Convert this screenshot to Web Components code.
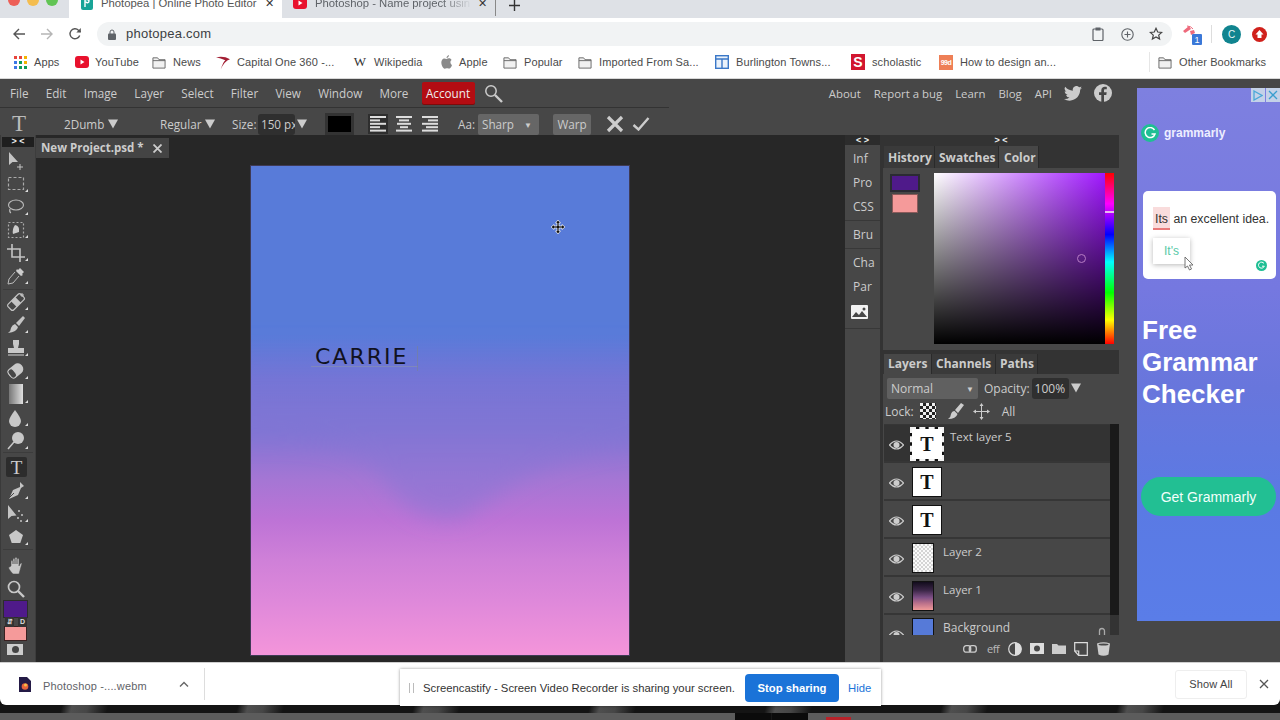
<!DOCTYPE html>
<html><head><meta charset="utf-8"><title>Photopea</title>
<style>
html,body{margin:0;padding:0;width:1280px;height:720px;overflow:hidden;background:#111;font-family:"Open Sans","Liberation Sans",sans-serif}
</style></head><body>
<browser-chrome></browser-chrome>
<pp-app></pp-app>
<download-bar></download-bar>
<wallpaper-strip></wallpaper-strip>
<share-bar></share-bar>
<script>
const def=(n,h)=>customElements.define(n,class extends HTMLElement{constructor(){super();this.attachShadow({mode:'open'}).innerHTML=h}});
const folder='<svg slot="icon" width="15" height="13" viewBox="0 0 15 13"><path d="M1 1.5h5l1.5 2H14v9H1z" fill="#f1f1f1" stroke="#666" stroke-width="1"/><path d="M1 4.5h13" stroke="#666"/></svg>';
const tri='<svg width="10" height="10" viewBox="0 0 10 10" style="flex:none"><path d="M0 .5h10L5 9.500z" fill="#ccc"/></svg>';

def('bm-item',`<style>:host{display:flex;align-items:center;flex:none;gap:7px;font:11px "Liberation Sans",sans-serif;letter-spacing:.1px;color:#4a4a4a;white-space:nowrap}
.i{width:14px;height:14px;display:flex;align-items:center;justify-content:center;flex:none}</style><span class="i"><slot name="icon"></slot></span><slot></slot>`);

def('browser-chrome',`<style>
:host{display:block;background:#fff;height:79px;font-family:"Liberation Sans",sans-serif}
.tabs{height:18px;background:#dee1e6;overflow:hidden;display:flex;align-items:flex-end;position:relative}
.dots{display:flex;gap:7px;width:69px;padding-left:8px;box-sizing:border-box;align-self:flex-end;margin-bottom:12px}
.dots i{width:12px;height:12px;border-radius:50%;flex:none}
.tab{width:213px;height:36px;box-sizing:border-box;flex:none;display:flex;align-items:flex-end;padding:0 0 8px 11px;font-size:11.300px;color:#5f6368;line-height:14px;position:relative}
.tab.on{background:#fff;border-radius:8px 8px 0 0;color:#555}
.tab svg{flex:none;margin-right:7px;margin-left:0}
.tab .t{flex:1;white-space:nowrap;height:14px}
.tab:not(.on) .t{-webkit-mask-image:linear-gradient(90deg,#000 80%,transparent 100%);mask-image:linear-gradient(90deg,#000 80%,transparent 100%)}
.tab .x{width:20px;text-align:center;color:#333;font-size:11px;margin-right:3px}
.plus{margin-left:13px;margin-bottom:7px;flex:none}
.sep{width:1px;height:16px;background:#888;flex:none;margin-bottom:2px}
.bar{height:28px;display:flex;align-items:center;padding-top:4px;box-sizing:border-box}
.nav{width:97px;display:flex;flex:none;padding-left:12px;box-sizing:border-box;gap:14px;align-items:center}
.omni{width:1075px;height:24px;flex:none;background:#f1f3f4;border-radius:12px;display:flex;align-items:center;box-sizing:border-box;padding-left:11px;font-size:13px;color:#3c4043;letter-spacing:.25px}
.omni .u{margin-left:10px;flex:1;margin-top:-1px}
.omni svg{flex:none}
.ext{display:flex;align-items:center;flex:1;position:relative}
.book{height:33px;display:flex;align-items:center;padding-left:13px;border-bottom:1px solid #d8d8d8;box-sizing:border-box}
</style>
<div class="tabs">
 <div class="dots"><i style="background:#ed5f57"></i><i style="background:#f4bd4f"></i><i style="background:#61c454"></i></div>
 <div class="tab on"><svg width="14" height="14" viewBox="0 0 14 14"><rect x="1" y="0" width="12" height="14" rx="2" fill="#18a497"/><path d="M5 11V4.500c0-1.500 4-1.500 4 .5s-3 2.500-3 .5" fill="none" stroke="#fff" stroke-width="1.400"/></svg><span class="t">Photopea | Online Photo Editor</span><span class="x">✕</span></div>
 <div class="tab"><svg width="14" height="14" viewBox="0 0 14 14" style="margin-right:8px"><rect y="1" width="14" height="12" rx="3" fill="#e8112d"/><path d="M5.500 4.500v5l4-2.500z" fill="#fff"/></svg><span class="t">Photoshop - Name project usin</span><span class="x">✕</span></div>
 <div class="sep"></div>
 <svg class="plus" width="11" height="11" viewBox="0 0 11 11"><path d="M5.500 0v11M0 5.500h11" stroke="#333" stroke-width="1.400"/></svg>
</div>
<div class="bar">
 <div class="nav">
  <svg width="14" height="14" viewBox="0 0 14 14"><path d="M13 7H2M7 2 2 7l5 5" fill="none" stroke="#555" stroke-width="1.400"/></svg>
  <svg width="14" height="14" viewBox="0 0 14 14"><path d="M1 7h11M7 2l5 5-5 5" fill="none" stroke="#b5b5b5" stroke-width="1.400"/></svg>
  <svg width="14" height="14" viewBox="0 0 14 14"><path d="M11.700 8.500A5 5 0 1 1 10.500 3.200L12.500 5" fill="none" stroke="#555" stroke-width="1.400"/><path d="M12.800 1v4.500H8.300z" fill="#555"/></svg>
 </div>
 <div class="omni"><svg width="8" height="11" viewBox="0 0 8 11"><path d="M2 5V3a2 2 0 0 1 4 0v2" fill="none" stroke="#5f6368"/><rect y="4.500" width="8" height="6.500" rx="1" fill="#5f6368"/></svg><span class="u">photopea.com</span>
  <svg width="12" height="14" viewBox="0 0 12 14" style="margin-right:17px"><rect x="1" y="2" width="10" height="11.500" rx="1" fill="none" stroke="#5f6368" stroke-width="1.200"/><rect x="3.500" y=".5" width="5" height="3" fill="#5f6368"/></svg>
  <svg width="13" height="13" viewBox="0 0 13 13" style="margin-right:15px"><circle cx="6.500" cy="6.500" r="5.700" fill="none" stroke="#5f6368" stroke-width="1.100"/><path d="M6.500 3.500v6M3.500 6.500h6" stroke="#5f6368" stroke-width="1.100"/></svg>
  <svg width="14" height="14" viewBox="0 0 14 14" style="margin-right:9px"><path d="M7 1.300 8.700 5l4 .4-3 2.700.9 4L7 10l-3.600 2.100.9-4-3-2.700 4-.4z" fill="none" stroke="#444" stroke-width="1.200"/></svg>
 </div>
 <div class="ext">
  <svg width="22" height="22" viewBox="0 0 22 22" style="margin-left:9px"><path d="M2 8l6-5 2 3-6 4zM9 8l4-1 1 3-4 2z" fill="#ee6a7c"/><path d="M6 3q4 0 6 3" fill="none" stroke="#ee6a7c"/><rect x="11" y="11" width="10" height="11" rx="1" fill="#3b78d8"/><text x="16" y="20" font-size="9" fill="#fff" text-anchor="middle" font-family="Liberation Sans">1</text></svg>
  <span style="width:1px;height:18px;background:#ddd;margin-left:8px"></span>
  <span style="width:19px;height:19px;border-radius:50%;background:#10848f;color:#e8f6f6;font-size:10px;display:flex;align-items:center;justify-content:center;margin-left:10px">C</span>
  <svg width="15" height="15" viewBox="0 0 15 15" style="margin-left:11px"><circle cx="7.500" cy="7.500" r="7.500" fill="#d0211c"/><path d="M7.500 3 11.500 7.500H9.500V11H5.500V7.500H3.500z" fill="#fff"/></svg>
 </div>
</div>
<div class="book">
 <bm-item style="width:62px"><svg slot="icon" width="13" height="13" viewBox="0 0 13 13"><g><rect width="3" height="3" fill="#e8453c"/><rect x="5" width="3" height="3" fill="#e8453c"/><rect x="10" width="3" height="3" fill="#f4b400"/><rect y="5" width="3" height="3" fill="#3b78e7"/><rect x="5" y="5" width="3" height="3" fill="#0f9d58"/><rect x="10" y="5" width="3" height="3" fill="#f4b400"/><rect y="10" width="3" height="3" fill="#3b78e7"/><rect x="5" y="10" width="3" height="3" fill="#0f9d58"/><rect x="10" y="10" width="3" height="3" fill="#0f9d58"/></g></svg>Apps</bm-item>
 <bm-item style="width:77px;gap:6px"><svg slot="icon" width="14" height="12" viewBox="0 0 14 12"><rect width="14" height="12" rx="3" fill="#e8112d"/><path d="M5.500 3.500v5l4-2.500z" fill="#fff"/></svg>YouTube</bm-item>
 <bm-item style="width:64px">${folder}News</bm-item>
 <bm-item style="width:137px"><svg slot="icon" width="15" height="15" viewBox="0 0 15 15"><path d="M0 2 Q8 0 15 4 Q9 6 5 15 Q8 6 10 5 Q5 3 0 2z" fill="#a31f34"/></svg>Capital One 360 -...</bm-item>
 <bm-item style="width:88px"><span slot="icon" style="font:13px 'Liberation Serif',serif;color:#333">W</span>Wikipedia</bm-item>
 <bm-item style="width:62px;gap:4px"><svg slot="icon" width="11" height="14" viewBox="0 0 11 14" style="margin-left:-4px"><path d="M5.500 4C7 3 10 3 10.500 5 9 6 9 9 11 10 10 13 8.500 14 7.500 13.500 6 13 5 13 3.500 13.700 2 13.500-1 8 1 5 2.500 3 4 3.500 5.500 4zM5.500 3C5.500 1.500 6.500.5 8 0 8 1.500 7 3 5.500 3z" fill="#8a8a8a"/></svg>Apple</bm-item>
 <bm-item style="width:75px">${folder}Popular</bm-item>
 <bm-item style="width:137px">${folder}Imported From Sa...</bm-item>
 <bm-item style="width:136px"><svg slot="icon" width="14" height="14" viewBox="0 0 14 14"><rect x=".7" y=".7" width="12.600" height="12.600" fill="#eaf2fb" stroke="#3b78c8" stroke-width="1.400"/><path d="M1 4h12M7 4v9" stroke="#3b78c8" stroke-width="1.400"/></svg>Burlington Towns...</bm-item>
 <bm-item style="width:88px"><span slot="icon" style="background:#d2162f;color:#fff;font:bold 14px 'Liberation Sans',sans-serif;width:15px;height:16px;display:flex;align-items:center;justify-content:center">S</span>scholastic</bm-item>
 <bm-item style="width:120px"><span slot="icon" style="background:#ee7f56;color:#fff;font:bold 7px 'Liberation Sans',sans-serif;width:14px;height:15px;display:flex;align-items:center;justify-content:center;letter-spacing:-.5px">99d</span>How to design an...</bm-item>
 <span style="width:1px;height:20px;background:#e6e6e6;margin-left:90px;margin-right:8px"></span>
 <bm-item>${folder}Other Bookmarks</bm-item>
</div>`);

def('pp-menubar',`<style>
:host{display:flex;align-items:center;height:29px;padding:0 25px 1px 10px;box-sizing:border-box;font-size:11.700px;color:#ccc;background:#474747;position:relative}
.l,.r{display:flex;align-items:center}
.l{gap:17.200px}.r{margin-left:auto;gap:13px;font-size:11.400px}
.acc{background:#b30c12;color:#eee;height:22px;display:flex;align-items:center;border-radius:2px;margin:0 -2px 0 -4px;width:53px;justify-content:center;box-sizing:border-box;box-shadow:0 1px 0 #7d0a0a}
.line{position:absolute;left:0;bottom:0;width:669px;height:1px;background:#333}
svg{display:block}
</style>
<div class="l"><span>File</span><span>Edit</span><span>Image</span><span>Layer</span><span>Select</span><span>Filter</span><span>View</span><span>Window</span><span>More</span><span class="acc">Account</span>
<svg width="19" height="19" viewBox="0 0 19 19" style="margin-left:-6px"><circle cx="7" cy="7" r="5.200" fill="none" stroke="#ccc" stroke-width="1.500"/><path d="M11 11l7 7" stroke="#ccc" stroke-width="2.400"/></svg></div>
<div class="r"><span>About</span><span>Report a bug</span><span>Learn</span><span>Blog</span><span>API</span>
<svg width="18" height="15" viewBox="0 0 24 20" style="margin-left:-1px"><path fill="#ccc" d="M24 2.400a10 10 0 0 1-2.800.8A5 5 0 0 0 23.300.5a10 10 0 0 1-3.100 1.200 4.900 4.900 0 0 0-8.400 4.500A14 14 0 0 1 1.700.9a4.900 4.900 0 0 0 1.500 6.600 4.900 4.900 0 0 1-2.200-.6 4.900 4.900 0 0 0 3.900 4.900 5 5 0 0 1-2.200.1 4.900 4.900 0 0 0 4.600 3.400A10 10 0 0 1 0 17.300 14 14 0 0 0 7.500 19.500c9.100 0 14.300-7.700 14-14.600A10 10 0 0 0 24 2.400z"/></svg>
<svg width="18" height="18" viewBox="0 0 18 18" style="margin-left:-1px"><circle cx="9" cy="9" r="9" fill="#ccc"/><path fill="#474747" d="M10 18v-7h2.300l.4-2.700H10V6.600c0-.8.300-1.300 1.400-1.300h1.400V2.900c-.3 0-1.100-.1-2-.1-2 0-3.500 1.200-3.500 3.500v2H5V11h2.300v7z"/></svg></div>
<div class="line"></div>`);

const alignIcon=(a)=>{const w=[[16,10,16,10,16],[16,10,14,8,16],[16,10,16,12,16]][a];return '<svg width="18" height="18" viewBox="0 0 18 18">'+w.map((l,i)=>{const x=a==0?1:a==1?(18-l)/2:17-l;return `<rect x="${x}" y="${1+i*3.4}" width="${l}" height="2" fill="#ddd"/>`}).join('')+'</svg>'};
def('pp-options',`<style>
:host{display:flex;align-items:center;height:27px;padding-top:5px;box-sizing:border-box;font-size:11.700px;color:#ccc;background:#474747;white-space:nowrap}
.inp{background:#2f2f2f;border-radius:3px;height:21px;display:flex;align-items:center;box-sizing:border-box;padding-left:3px;overflow:hidden;color:#ccc;flex:none}
.sw{width:29px;height:22px;background:#000;border:3px solid #333;box-sizing:border-box;flex:none}
.al{width:20px;height:20px;display:flex;align-items:center;justify-content:center;flex:none}
.sel{background:#666;border-radius:2px;height:21px;display:flex;align-items:center;box-sizing:border-box;padding:0 3px;flex:none}
.w{flex:none;display:block}
</style>
<span class="w" style="font:23px 'Liberation Serif',serif;color:#bbb;width:18px;margin-left:10px;text-align:center;line-height:22px">T</span>
<span class="w" style="margin-left:36px;width:39px">2Dumb</span><span style="margin-left:5px;display:flex">${tri}</span>
<span class="w" style="margin-left:42px;width:42px">Regular</span><span style="margin-left:3px;display:flex">${tri}</span>
<span class="w" style="margin-left:17px;width:24px">Size:</span>
<span class="inp" style="width:37px;margin-left:2px">150 px</span><span style="margin-left:2px;display:flex">${tri}</span>
<span class="sw" style="margin-left:18px"></span>
<span class="al" style="margin-left:14px;background:#2e2e2e">${alignIcon(0)}</span>
<span class="al" style="margin-left:6px">${alignIcon(1)}</span>
<span class="al" style="margin-left:6px">${alignIcon(2)}</span>
<span class="w" style="margin-left:18px;width:16px">Aa:</span>
<span class="sel" style="width:61px;margin-left:4px;justify-content:space-between;padding:0 4px"><span>Sharp</span><span style="font-size:8px;margin-right:3px">▼</span></span>
<span class="sel" style="width:38px;margin-left:14px;justify-content:center">Warp</span>
<svg width="18" height="18" viewBox="0 0 18 18" style="margin-left:15px;flex:none"><path d="M2 2l14 14M16 2 2 16" stroke="#ccc" stroke-width="3.200"/></svg>
<svg width="18" height="14" viewBox="0 0 18 14" style="margin-left:8px;flex:none"><path d="M1.500 8l5 4.500L16.500 1" fill="none" stroke="#ccc" stroke-width="2.400"/></svg>`);

const tool=(svg,corner=1,h=23)=>`<div class="t" style="height:${h}px"><svg width="20" height="20" viewBox="0 0 20 20">${svg}</svg>${corner?'<i></i>':''}</div>`;
def('pp-tools',`<style>
:host{display:block;width:36px;box-sizing:border-box;background:#474747;border-left:1px solid #3a3a3a;border-right:1px solid #3d3d3d;position:relative;height:527px}
.top{height:10px;margin:2px 1px 0;background:#1f1f1f;color:#eee;font:bold 9px/9px "Liberation Sans",sans-serif;text-align:center}
.t{display:flex;align-items:center;justify-content:center;position:relative;width:34px;padding-right:4px;box-sizing:border-box}
.t i{position:absolute;right:7px;bottom:3px;width:0;height:0;border-left:3px solid transparent;border-bottom:3px solid #ddd}
hr{border:0;border-top:1px solid #3c3c3c;margin:2px 2px 1px;height:0}
.T{font:19px "Liberation Serif",serif;color:#ccc;width:21px;height:20px;background:#2c2c2c;display:flex;align-items:center;justify-content:center;padding:0;border-radius:2px;line-height:1}
.colors{margin:0 0 0 1px;position:relative;height:42px;width:26px}
.fg{position:absolute;left:1px;top:0;width:25px;height:18px;background:#4f1a8a;border:1px solid #2c2c2c;box-sizing:border-box}
.bg{position:absolute;left:2px;top:26px;width:23px;height:15px;background:#f59a9a;border:1px solid #3a2020;box-sizing:border-box}
.sm{position:absolute;top:17px;width:9px;height:10px;background:#333;color:#ddd;font:bold 7px/10px "Liberation Sans",sans-serif;text-align:center}
.mask{margin:2px 0 0 6px;width:16px;height:11px;background:#ccc;display:flex;align-items:center;justify-content:center}
.mask b{width:7px;height:7px;border-radius:50%;background:#444;display:block}
</style>
<div class="top">&gt; &lt;</div>
<div style="height:2px"></div>
${tool('<path d="M3 1v13l3.500-3h5.500z" fill="#c4c4c4"/><path d="M14 13v6M11 16h6" stroke="#c4c4c4" stroke-width="1"/>',0)}
${tool('<rect x="2.500" y="3.500" width="15" height="12" fill="none" stroke="#aaa" stroke-width="1.200" stroke-dasharray="3 2"/>')}
${tool('<ellipse cx="10" cy="8" rx="7.500" ry="5" fill="none" stroke="#bbb" stroke-width="1.100"/><path d="M4 12q-1 3 1 4" fill="none" stroke="#bbb" stroke-width="1.100"/>')}
${tool('<rect x="2.500" y="2.500" width="15" height="15" fill="none" stroke="#aaa" stroke-width="1.200" stroke-dasharray="2 2"/><path d="M9 5q5 1 4 7l-6 2q-1-5 2-9z" fill="#ccc"/>')}
${tool('<path d="M6 1v13h13M1 6h13v13" fill="none" stroke="#c4c4c4" stroke-width="1.600"/>')}
${tool('<path d="M14 2l4 4-2 2 1 1-2 1-5-5 1-2 1 1z" fill="#ccc"/><path d="M9 6 3 13l-1 5 5-1 6-7" fill="none" stroke="#bbb" stroke-width="1"/>')}
<hr style="margin-bottom:0">
${tool('<g transform="rotate(45 10 10)"><rect x="6" y="1" width="8" height="18" rx="2" fill="none" stroke="#c4c4c4" stroke-width="1.200"/><rect x="6" y="7" width="8" height="6" fill="#c4c4c4"/></g><path d="M16 1v4M14 3h4" stroke="#c4c4c4"/>')}
${tool('<path d="M17 1l2 2-6 8-3-3z" fill="#c4c4c4"/><path d="M9 9l3 3q-1 5-10 6 3-2 3-5 1-3 4-4z" fill="#c8c8c8"/>')}
${tool('<path d="M7 2h6v4l-1 4h6v5H2v-5h6L7 6z" fill="#c8c8c8"/><rect x="2" y="16" width="16" height="2" fill="#8d8d8d"/>')}
${tool('<g transform="rotate(-40 10 10)"><rect x="2" y="4" width="16" height="11" rx="5" fill="#c8c8c8"/><rect x="2.500" y="4.500" width="6" height="10" rx="3" fill="#474747" stroke="#c8c8c8"/></g>')}
<div class="t" style="height:24px"><span style="width:14px;height:20px;background:linear-gradient(90deg,#777,#e0e0e0);display:block"></span><i></i></div>
${tool('<path d="M9 2q6 8 6 11a6 6 0 0 1-12 0Q3 10 9 2z" fill="#c8c8c8"/>')}
${tool('<circle cx="12" cy="7" r="6" fill="#c8c8c8"/><path d="M8 11 2 18" stroke="#c8c8c8" stroke-width="1.500"/>')}
<hr style="margin-top:0">
<div style="height:1px"></div>
<div class="t" style="height:24px;padding-right:3px"><span class="T">T</span></div>
${tool('<path d="M15 1l4 4-3 2-3 7-9 4 4-9 7-3z" fill="#c4c4c4" transform="translate(-1 0)"/><path d="M3 17l5-5" stroke="#474747"/>')}
${tool('<path d="M2 1v14l3.500-3 5-.5z" fill="#c4c4c4"/><circle cx="13" cy="7" r="1" fill="#c4c4c4"/><circle cx="16" cy="11" r="1" fill="#c4c4c4"/><circle cx="12" cy="14" r="1" fill="#c4c4c4"/><circle cx="15" cy="17" r="1" fill="#c4c4c4"/>')}
${tool('<path d="M10 3l7 5-2.700 8H5.700L3 8z" fill="#c8c8c8"/>')}
<hr style="margin-top:1px">
<div style="height:3px"></div>
${tool('<path d="M5 10V5q1-1.500 2 0v3-5q1-1.500 2 0v5-6q1-1.500 2 0v6-5q1-1.500 2 0v7q1-3 2.500-3 1 .5 0 2L13 18H7q-2-2-4-5-1-2 .5-2z" fill="#c8c8c8" stroke="#474747" stroke-width=".5"/>',0)}
${tool('<circle cx="8" cy="8" r="5.500" fill="none" stroke="#c8c8c8" stroke-width="1.700"/><path d="M12 12l6 6" stroke="#c8c8c8" stroke-width="2.400"/>',0)}
<div class="colors"><div class="fg"></div><div class="bg"></div><div class="sm" style="left:3px">⇵</div><div class="sm" style="left:16px">D</div></div>
<div class="mask"><b></b></div>`);

def('pp-canvas',`<style>
:host{display:block;width:378px;height:489px;position:relative;flex:none;overflow:hidden;
background:linear-gradient(180deg,#587bd9 0,#587bd9 170px,#6f74d6 214px,#7f74d4 264px,#a576d4 314px,#bd73d6 354px,#cf80d8 394px,#de88da 434px,#f495da 489px);outline:1px solid #3f3a55}
.wave{position:absolute;left:0;top:0;pointer-events:none}
.txt{position:absolute;left:64px;top:177px;font:22px/28px "DejaVu Sans",sans-serif;letter-spacing:2px;color:#11121f;white-space:nowrap}
.under{position:absolute;left:60px;top:200px;width:107px;height:1px;background:rgba(140,150,170,.55)}
.caret{position:absolute;left:166px;top:180px;width:1px;height:25px;background:rgba(120,130,150,.6)}
.mv{position:absolute;left:300px;top:54px}
</style>
<svg class="wave" width="378" height="489" viewBox="0 0 378 489"><defs><filter id="b" x="-20%" y="-20%" width="140%" height="140%"><feGaussianBlur stdDeviation="11"/></filter><linearGradient id="g" x1="0" y1="0" x2="0" y2="1"><stop offset="0" stop-color="#8176d4" stop-opacity="0"/><stop offset=".45" stop-color="#8076d4" stop-opacity=".6"/><stop offset="1" stop-color="#9476d4" stop-opacity=".75"/></linearGradient></defs>
<path d="M-20 272C60 272 100 272 130 308 150 345 185 358 212 350 260 322 300 280 400 276V170H-20z" fill="url(#g)" filter="url(#b)"/></svg>
<span class="txt">CARRIE</span><span class="under"></span><span class="caret"></span>
<svg class="mv" width="14" height="14" viewBox="0 0 14 14"><path d="M7 0l2.500 3H8v3h3V4.500L14 7l-3 2.500V8H8v3h1.500L7 14l-2.500-3H6V8H3v1.500L0 7l3-2.500V6h3V3H4.500z" fill="#111" stroke="#fff" stroke-width=".7"/></svg>`);

def('pp-workspace',`<style>
:host{display:flex;flex-direction:column;width:809px;height:527px;background:#272727;flex:none}
.tabs{height:23px;padding-top:3px;box-sizing:border-box;display:flex;flex:none}
.tab{width:133px;height:20px;background:#444;color:#ccc;font:bold 11.500px/20px "Open Sans",sans-serif;padding-left:5px;box-sizing:border-box;display:flex;align-items:center;white-space:nowrap}
.tab svg{margin-left:9px;flex:none}
.doc{flex:1;display:flex;justify-content:center;padding-top:8px;padding-right:1px}
</style>
<div class="tabs"><div class="tab">New Project.psd *<svg width="9" height="9" viewBox="0 0 9 9"><path d="M.5.5l8 8M8.500.5l-8 8" stroke="#ccc" stroke-width="1.800"/></svg></div></div>
<div class="doc"><pp-canvas></pp-canvas></div>`);

def('pp-dock',`<style>
:host{display:block;width:35px;height:527px;background:#474747;box-sizing:border-box;font-size:12px;color:#ccc;flex:none}
.top{height:10px;background:#2c2c2c;color:#eee;font:bold 9px/10px "Liberation Sans",sans-serif;text-align:center}
.i{height:24px;display:flex;align-items:center;padding-left:8px}
.g{border-bottom:1px solid #383838;padding:0 0 2px}
</style>
<div class="top">&lt; &gt;</div>
<div class="g" style="padding-top:1px"><div class="i">Inf</div><div class="i">Pro</div><div class="i">CSS</div></div>
<div class="g" style="padding:1px 0 2px"><div class="i">Bru</div></div>
<div class="g" style="padding-top:1px"><div class="i">Cha</div><div class="i">Par</div>
<div class="i" style="height:28px;padding-left:6px"><svg width="17" height="14" viewBox="0 0 17 14"><rect width="17" height="14" rx="1" fill="#f2f2f2"/><path d="M1 12l4-5 3 3 3-4 5 6z" fill="#474747"/><circle cx="13" cy="4" r="1.500" fill="#474747"/></svg></div></div>`);

def('pp-tabs',`<style>
:host{display:flex;height:var(--h,21px);background:#333;font:bold 12px "Open Sans",sans-serif;color:#ccc;align-items:flex-end;padding-left:1px;box-sizing:border-box;flex:none}
::slotted(span){height:100%;display:flex;align-items:center;padding:0 4px var(--pb,0);box-sizing:border-box;background:#3a3a3a;border-right:1px solid #2a2a2a;white-space:nowrap}
::slotted(span.on){background:#474747}
</style><slot></slot>`);

def('pp-color',`<style>
:host{display:flex;height:182px;background:#474747;box-sizing:border-box;position:relative;flex:none}
.sw{width:51px;flex:none;position:relative}
.f{position:absolute;left:7px;top:6px;width:30px;height:18px;background:#4f1a8a;border:2px solid #2b2b33;box-sizing:border-box}
.b{position:absolute;left:9px;top:26px;width:26px;height:19px;background:#f59a9a;border:1px solid #8a5a5a;box-sizing:border-box}
.sv{width:171px;height:171px;margin-top:5px;flex:none;position:relative;background:linear-gradient(0deg,#000,transparent),linear-gradient(90deg,#fff,#a018ff)}
.sv i{position:absolute;left:143px;top:81px;width:7px;height:7px;border:1px solid #b77dc4;border-radius:50%}
.h{width:9px;height:171px;margin-top:5px;flex:none;position:relative;background:linear-gradient(180deg,#f00 0,#f0f 18%,#00f 36%,#0ff 52%,#0f0 70%,#ff0 86%,#f00 100%)}
.h i{position:absolute;left:0;top:38px;width:100%;height:2px;background:#e8b8f0}
</style>
<div class="sw"><div class="f"></div><div class="b"></div></div>
<div class="sv"><i></i></div><div class="h"><i></i></div>`);

const eye='<svg width="15" height="10" viewBox="0 0 15 10"><path d="M.5 5Q7.500-3 14.500 5 7.500 13 .5 5z" fill="none" stroke="#ccc" stroke-width="1.200"/><circle cx="7.500" cy="5" r="3" fill="#ccc"/></svg>';
def('pp-layer',`<style>
:host{display:flex;height:38px;box-sizing:border-box;border-bottom:2px solid #363636;background:#474747;color:#ccc;font-size:11.500px;position:relative;flex:none}
:host([sel]){background:#333}
.e{width:28px;height:36px;flex:none;display:flex;align-items:center;justify-content:center;padding:4px 3px 0 0;box-sizing:border-box}
.n{margin:4px 0 0 9px;white-space:nowrap;line-height:18px}
</style><div class="e">${eye}</div><slot name="thumb"></slot><div class="n"><slot></slot></div>`);

const T='<span slot="thumb" style="flex:none;width:30px;height:30px;margin-top:4px;border:1px solid #111;box-sizing:border-box;background:#fff;color:#111;display:flex;align-items:center;justify-content:center;font:bold 20px \'Liberation Serif\',serif;">T</span>';
def('pp-layers',`<style>
:host{display:flex;flex-direction:column;flex:1;background:#474747;font-size:12px;color:#ccc;min-height:0}
.r1{height:24px;margin-top:2px;display:flex;align-items:center;padding-left:4px;white-space:nowrap;flex:none}
.sel{width:91px;height:21px;background:#606060;border-radius:2px;display:flex;align-items:center;justify-content:space-between;padding:0 4px;box-sizing:border-box}
.inp{background:#2f2f2f;border-radius:3px;width:37px;height:21px;display:flex;align-items:center;padding-left:3px;box-sizing:border-box;margin-left:2px}
.r2{height:22px;display:flex;align-items:center;padding-left:2px;flex:none}
.list{height:211px;margin-left:1px;display:flex;flex:none;overflow:hidden;margin-top:2px}
.rows{width:226px;flex:none;display:flex;flex-direction:column;border-top:1px solid #363636;box-sizing:border-box}
.sb{width:9px;background:#333;flex:none}.sb i{display:block;height:191px;background:#1a1a1a}
.foot{height:27px;display:flex;align-items:center;padding-left:80px;flex:none}
.foot svg{flex:none;display:block}
.check{width:16px;height:16px;background:repeating-conic-gradient(#222 0 25%,#eee 0 50%) 0 0/6px 6px}
</style>
<div class="r1"><span class="sel"><span>Normal</span><span style="font-size:8px">▼</span></span><span style="margin-left:6px">Opacity:</span><span class="inp">100%</span><span style="margin-left:2px;display:flex">${tri}</span></div>
<div class="r2"><span>Lock:</span><span class="check" style="margin-left:6px"></span>
<svg width="16" height="16" viewBox="0 0 16 16" style="margin-left:12px"><path d="M13 0l3 2-6 8-3-3zM6.500 8l3 3Q8 16 0 16q3-2 3-5 1-3 3.500-3z" fill="#ccc"/></svg>
<svg width="17" height="17" viewBox="0 0 17 17" style="margin-left:9px"><path d="M8.500 1v15M1 8.500h15" stroke="#ccc"/><path d="M8.500 0l2 3h-4zM8.500 17l2-3h-4zM0 8.500l3-2v4zM17 8.500l-3-2v4z" fill="#ccc"/></svg>
<span style="margin-left:12px">All</span></div>
<div class="list"><div class="rows">
<pp-layer sel><span slot="thumb" style="flex:none;margin:2px 0 0 -2px;width:34px;height:34px;border:2px dashed #f2f2f2;box-sizing:border-box;background:linear-gradient(#fff,#fff) padding-box,#111 border-box;color:#111;display:flex;align-items:center;justify-content:center;font:bold 20px 'Liberation Serif',serif">T</span><span style="margin:-1px 0 0 -3px;display:block">Text layer 5</span></pp-layer>
<pp-layer>${T}</pp-layer>
<pp-layer>${T}</pp-layer>
<pp-layer><span slot="thumb" style="flex:none;width:22px;height:30px;margin-top:4px;border:1px solid #111;box-sizing:border-box;background:repeating-conic-gradient(#d4d4d4 0 25%,#fafafa 0 50%) 0 0/4px 4px"></span>Layer 2</pp-layer>
<pp-layer><span slot="thumb" style="flex:none;width:22px;height:30px;margin-top:4px;border:1px solid #111;box-sizing:border-box;background:linear-gradient(180deg,#120c1c 0,#3c2748 30%,#7d4f85 55%,#b86f8a 75%,#f09a98 100%)"></span>Layer 1</pp-layer>
<pp-layer style="border:0"><span slot="thumb" style="flex:none;width:22px;height:30px;margin-top:3px;border:1px solid #111;box-sizing:border-box;background:#567ad8"></span><span style="font-size:12px">Background</span><svg style="position:absolute;right:4px;top:12px" width="8" height="9" viewBox="0 0 8 9"><path d="M1.500 9V4a2.500 2.500 0 0 1 5 0v5" fill="none" stroke="#aaa" stroke-width="1.300"/></svg></pp-layer>
</div><div class="sb"><i></i></div></div>
<div class="foot">
<svg width="14" height="8" viewBox="0 0 14 8"><rect x=".7" y=".7" width="7" height="6.500" rx="2.500" fill="none" stroke="#ccc" stroke-width="1.300"/><rect x="6.300" y=".7" width="7" height="6.500" rx="2.500" fill="none" stroke="#ccc" stroke-width="1.300"/></svg>
<span style="margin-left:10px;width:12px;font-size:11px;letter-spacing:-.5px;color:#bbb">eff</span>
<svg width="14" height="14" viewBox="0 0 14 14" style="margin-left:9px"><circle cx="7" cy="7" r="6.300" fill="none" stroke="#ddd" stroke-width="1.200"/><path d="M7 .7a6.300 6.300 0 0 1 0 12.600z" fill="#ddd"/></svg>
<svg width="14" height="11" viewBox="0 0 14 11" style="margin-left:8px"><rect width="14" height="11" fill="#ddd"/><circle cx="7" cy="5.500" r="3" fill="#474747"/></svg>
<svg width="14" height="11" viewBox="0 0 14 11" style="margin-left:8px"><path d="M0 1h5l1.500 1.500H14V11H0z" fill="#ccc"/></svg>
<svg width="14" height="14" viewBox="0 0 14 14" style="margin-left:8px"><path d="M.7.7h12.600v12.600H4.500L.7 9z" fill="none" stroke="#ddd" stroke-width="1.200"/><path d="M.7 9h4v4" fill="none" stroke="#ddd" stroke-width="1.200"/></svg>
<svg width="13" height="14" viewBox="0 0 13 14" style="margin-left:9px"><path d="M0 1.500Q6.500-1 13 1.500l-1.500 11Q6.500 15 1.500 12.500z" fill="#ccc"/><ellipse cx="6.500" cy="2.500" rx="5" ry="1" fill="#474747"/></svg>
</div>`);

def('pp-panels',`<style>
:host{display:flex;flex-direction:column;width:236px;height:527px;flex:none;background:#474747}
.top{height:11px;background:#333;color:#eee;font:bold 9px/10px "Liberation Sans",sans-serif;text-align:center;flex:none}
.bar{height:4px;background:#333;flex:none;width:100%}
</style>
<div class="top">&gt; &lt;</div>
<pp-tabs style="--h:22px"><span style="width:51px">History</span><span style="width:64px">Swatches</span><span class="on" style="width:40px;padding:0 5px">Color</span></pp-tabs>
<pp-color></pp-color>
<div class="bar"></div>
<pp-tabs style="--h:20px;--pb:2px"><span class="on" style="width:48px">Layers</span><span style="width:64px">Channels</span><span style="width:42px">Paths</span></pp-tabs>
<pp-layers></pp-layers>`);

def('gram-ad',`<style>
:host{display:block;width:143px;height:533px;margin-top:9px;position:relative;flex:none;box-sizing:border-box;padding-top:36px;overflow:hidden;background:linear-gradient(180deg,#7e80e0 0,#7578e0 200px,#6876dc 300px,#5a7ae4 420px,#5a7de8 100%);font-family:"Liberation Sans",sans-serif;color:#fff}
.ac{position:absolute;right:0;top:0;display:flex;gap:1px}
.ac span{width:14px;height:14px;background:#c4d2e8;display:flex;align-items:center;justify-content:center}
.logo{display:flex;align-items:center;margin-left:4px;font:bold 12px "Liberation Sans",sans-serif;gap:5px;color:#eef}
.g{width:18px;height:18px;border-radius:50%;background:#1fbf94;display:flex;align-items:center;justify-content:center;flex:none}
.card{width:133px;height:88px;margin:49px 0 0 6px;background:#fff;border-radius:5px;position:relative;color:#333;box-sizing:border-box;padding:21px 0 0 12px;font-size:12.300px;white-space:nowrap;line-height:14px}
.card mark{background:#f9dcdc;color:#333;border-bottom:2px solid #e87a7a;padding:5px 2px 2px;margin-left:-2px}
.s{width:37px;height:26px;margin:12px 0 0 -2px;background:#fff;box-shadow:0 1px 5px rgba(0,0,0,.28);color:#57c9a6;display:flex;align-items:center;justify-content:center;font-size:12px}
.card svg{position:absolute}
h2{margin:35px 0 0 5px;font:bold 26px/32px "Liberation Sans",sans-serif;color:#fff}
.btn{width:135px;height:39px;margin:67px 0 0 4px;border-radius:20px;background:#22bf93;display:flex;align-items:center;justify-content:center;font-size:14px;color:#f2fffb}
</style>
<div class="ac"><span><svg width="10" height="11" viewBox="0 0 10 11"><path d="M1 1l8 4.500-8 4.500z" fill="none" stroke="#4aa8d8" stroke-width="1.300"/></svg></span><span><svg width="10" height="10" viewBox="0 0 10 10"><path d="M1 1l8 8M9 1 1 9" stroke="#3a9ecf" stroke-width="1.300"/></svg></span></div>
<div class="logo"><span class="g"><svg width="12" height="12" viewBox="0 0 12 12"><path d="M10.500 3A5 5 0 1 0 11 7H7.500" fill="none" stroke="#fff" stroke-width="1.500"/></svg></span>grammarly</div>
<div class="card"><div><mark>Its</mark> an excellent idea.</div><div class="s">It's</div>
<svg width="10" height="15" viewBox="0 0 10 15" style="left:41px;top:65px"><path d="M1 1v11l2.500-2 2 4 2-1-2-4H9z" fill="#fff" stroke="#666" stroke-width=".9"/></svg>
<svg width="11" height="11" viewBox="0 0 11 11" style="left:113px;top:69px"><circle cx="5.500" cy="5.500" r="5.500" fill="#1fbf94"/><path d="M8 3.500A3 3 0 1 0 8.300 6.200H6" fill="none" stroke="#fff" stroke-width="1"/></svg></div>
<h2>Free<br>Grammar<br>Checker</h2>
<div class="btn">Get Grammarly</div>`);

def('pp-app',`<style>
:host{display:flex;height:583px;background:#474747;overflow:hidden}
.left{width:1137px;flex:none;display:flex;flex-direction:column}
.main{display:flex;height:527px}
.gut{width:3px;background:#333;flex:none}
</style>
<div class="left"><pp-menubar></pp-menubar><pp-options></pp-options>
<div class="main"><pp-tools></pp-tools><pp-workspace></pp-workspace><pp-dock></pp-dock><span class="gut"></span><pp-panels></pp-panels></div></div>
<gram-ad></gram-ad>`);

def('download-bar',`<style>
:host{display:flex;align-items:center;height:43px;background:#fff;border-top:1px solid #cfcfcf;box-sizing:border-box;font:11px "Liberation Sans",sans-serif;color:#5f6368;border-radius:0 0 6px 6px;letter-spacing:.15px}
.sep{width:1px;height:32px;background:#ddd;flex:none}
.all{margin-left:auto;width:72px;height:29px;border:1px solid #eee;border-radius:3px;display:flex;align-items:center;justify-content:center;color:#444;box-sizing:border-box}
</style>
<svg width="12" height="15" viewBox="0 0 12 15" style="margin-left:19px;flex:none"><path d="M0 0h8l4 4v11H0z" fill="#241a46"/><circle cx="6" cy="9.500" r="3.300" fill="#e8643c"/><circle cx="6.500" cy="8" r="1.500" fill="#f5c04a"/></svg>
<span style="margin:3px 0 0 12px;width:136px;flex:none">Photoshop -....webm</span>
<svg width="10" height="6" viewBox="0 0 10 6" style="flex:none"><path d="M1 5.500l4-4 4 4" fill="none" stroke="#666" stroke-width="1.400"/></svg>
<span class="sep" style="margin-left:15px"></span>
<span class="all">Show All</span>
<svg width="10" height="10" viewBox="0 0 10 10" style="margin:0 11px 0 12px;flex:none"><path d="M1 1l8 8M9 1 1 9" stroke="#555" stroke-width="1.300"/></svg>`);

def('wallpaper-strip',`<style>
:host{display:block;height:15px;background:
linear-gradient(90deg,transparent 735px,#0b0b0b 735px,#0b0b0b 771px,#222 771px,#0b0b0b 772px,#0b0b0b 808px,transparent 808px) 0 8px/100% 7px no-repeat,
linear-gradient(90deg,transparent 826px,#b8232a 826px,#b8232a 851px,transparent 851px) 0 12px/100% 3px no-repeat,
linear-gradient(180deg,#141414 0,#141414 8px,#5c5c5c 8px,#5c5c5c 100%)}
.t{display:flex;height:8px;background:repeating-linear-gradient(105deg,transparent 0,transparent 60px,rgba(150,150,150,.45) 70px,rgba(220,220,220,.25) 85px,transparent 105px,transparent 170px)}
</style><div class="t"></div>`);

def('share-bar',`<style>
:host{position:absolute;left:400px;top:669px;width:481px;height:37px;background:#fff;box-shadow:0 0 3px rgba(0,0,0,.4);display:flex;align-items:center;font:11.300px "Liberation Sans",sans-serif;color:#333;white-space:nowrap}
.grip{width:5px;height:10px;border-left:1.500px solid #bbb;border-right:1.500px solid #bbb;margin-left:9px;box-sizing:border-box;flex:none}
.btn{width:94px;height:28px;background:#1a73d8;color:#fff;border-radius:4px;display:flex;align-items:center;justify-content:center;font-weight:bold;margin-left:10px;flex:none}
.hide{color:#1a73d8;margin-left:9px}
</style>
<span class="grip"></span><span style="margin-left:9px;width:312px;flex:none">Screencastify - Screen Video Recorder is sharing your screen.</span><span class="btn">Stop sharing</span><span class="hide">Hide</span>`);
</script>
</body></html>
